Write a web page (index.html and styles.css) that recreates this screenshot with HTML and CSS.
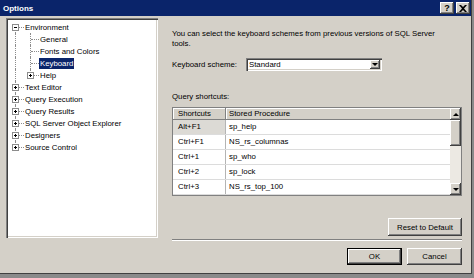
FILE: index.html
```html
<!DOCTYPE html>
<html lang="en">
<head>
    <meta charset="UTF-8">
    <meta name="viewport" content="width=device-width, initial-scale=1.0">
    <title>Options</title>
    <link rel="stylesheet" href="styles.css">
</head>
<body>
    <div class="window">
        <div class="titlebar">
            <span class="title">Options</span>
            <div class="title-buttons">
                <span class="tbtn help">?</span>
                <span class="tbtn close">
                    <svg width="8" height="7" viewBox="0 0 8 7"><path d="M0 0h2l2 2 2-2h2L5 3.5 8 7H6L4 5 2 7H0l3-3.5z" fill="#000"/></svg>
                </span>
            </div>
        </div>

        <div class="main">
            <!-- options tree -->
            <div class="tree">
                <div class="row">
                    <span class="cell bottom h"><span class="box"></span></span>
                    <span class="label">Environment</span>
                </div>
                <div class="row">
                    <span class="cell v"></span>
                    <span class="cell v h"></span>
                    <span class="label">General</span>
                </div>
                <div class="row">
                    <span class="cell v"></span>
                    <span class="cell v h"></span>
                    <span class="label">Fonts and Colors</span>
                </div>
                <div class="row">
                    <span class="cell v"></span>
                    <span class="cell v h"></span>
                    <span class="label selected">Keyboard</span>
                </div>
                <div class="row">
                    <span class="cell v"></span>
                    <span class="cell top h"><span class="box plus"></span></span>
                    <span class="label">Help</span>
                </div>
                <div class="row">
                    <span class="cell v h"><span class="box plus"></span></span>
                    <span class="label">Text Editor</span>
                </div>
                <div class="row">
                    <span class="cell v h"><span class="box plus"></span></span>
                    <span class="label">Query Execution</span>
                </div>
                <div class="row">
                    <span class="cell v h"><span class="box plus"></span></span>
                    <span class="label">Query Results</span>
                </div>
                <div class="row">
                    <span class="cell v h"><span class="box plus"></span></span>
                    <span class="label">SQL Server Object Explorer</span>
                </div>
                <div class="row">
                    <span class="cell v h"><span class="box plus"></span></span>
                    <span class="label">Designers</span>
                </div>
                <div class="row">
                    <span class="cell top h"><span class="box plus"></span></span>
                    <span class="label">Source Control</span>
                </div>
            </div>

            <div class="pane">
                <p class="desc">You can select the keyboard schemes from previous versions of SQL Server<br>tools.</p>

                <div class="scheme">
                    <label>Keyboard scheme:</label>
                    <div class="combo">
                        <span class="combo-text">Standard</span>
                        <span class="sbtn combo-btn"><span class="arrow down"></span></span>
                    </div>
                </div>

                <div class="section-label">Query shortcuts:</div>

                <div class="grid">
                    <div class="rows">
                        <div class="grow ghead">
                            <span class="gc first">Shortcuts</span>
                            <span class="gc">Stored Procedure</span>
                        </div>
                        <div class="grow">
                            <span class="gc first current">Alt+F1</span>
                            <span class="gc">sp_help</span>
                        </div>
                        <div class="grow">
                            <span class="gc first">Ctrl+F1</span>
                            <span class="gc">NS_rs_columnas</span>
                        </div>
                        <div class="grow">
                            <span class="gc first">Ctrl+1</span>
                            <span class="gc">sp_who</span>
                        </div>
                        <div class="grow">
                            <span class="gc first">Ctrl+2</span>
                            <span class="gc">sp_lock</span>
                        </div>
                        <div class="grow">
                            <span class="gc first">Ctrl+3</span>
                            <span class="gc">NS_rs_top_100</span>
                        </div>
                    </div>
                    <div class="scrollbar">
                        <span class="sbtn"><span class="arrow up"></span></span>
                        <span class="thumb"></span>
                        <span class="track"></span>
                        <span class="sbtn"><span class="arrow down"></span></span>
                    </div>
                </div>

                <div class="reset-row">
                    <button class="btn reset">Reset to Default</button>
                </div>
                <div class="sep"></div>
            </div>
        </div>

        <div class="footer">
            <button class="btn default">OK</button>
            <button class="btn">Cancel</button>
        </div>
    </div>
</body>
</html>
```

FILE: styles.css
```css
* {
    margin: 0;
    padding: 0;
    box-sizing: border-box;
}

body {
    width: 474px;
    height: 278px;
    background: #8a8a8a;
    font-family: "Liberation Sans", Arial, sans-serif;
    font-size: 7.8px;
    color: #000;
    overflow: hidden;
}

.window {
    width: 472px;
    height: 274px;
    background: #d4d0c8;
    border-right: 1px solid #404040;
    border-bottom: 1px solid #404040;
}

/* title bar */
.titlebar {
    height: 16px;
    background: #0a246a;
    display: flex;
    align-items: center;
    justify-content: space-between;
    padding: 0 1px 0 3px;
}

.title {
    color: #fff;
    font-weight: bold;
    font-size: 8px;
}

.title-buttons {
    display: flex;
    gap: 2px;
}

.tbtn {
    width: 14px;
    height: 12px;
    background: #d4d0c8;
    box-shadow: inset -1px -1px #404040, inset 1px 1px #fff, inset -2px -2px #808080;
    display: flex;
    align-items: center;
    justify-content: center;
    font-weight: bold;
    font-size: 9px;
    line-height: 1;
}

/* layout */
.main {
    display: flex;
    align-items: flex-start;
    padding: 2px 0 0 6px;
}

.tree {
    width: 152px;
    height: 220px;
    background: #fff;
    padding-top: 3px;
    box-shadow: inset 1px 1px #808080, inset 2px 2px #404040, inset -1px -1px #fff, inset -2px -2px #d4d0c8;
    padding-left: 2px;
}

.row {
    display: flex;
    align-items: center;
    height: 12px;
}

.cell {
    position: relative;
    flex: none;
    width: 15px;
    height: 12px;
}

.cell.v::before,
.cell.top::before,
.cell.bottom::before {
    content: "";
    position: absolute;
    left: 7px;
    top: 0;
    bottom: 0;
    border-left: 1px dotted #8c8c8c;
}

.cell.top::before {
    bottom: 6px;
}

.cell.bottom::before {
    top: 6px;
}

.cell.h::after {
    content: "";
    position: absolute;
    left: 8px;
    right: -1px;
    top: 6px;
    border-top: 1px dotted #8c8c8c;
}

.box {
    position: absolute;
    left: 4px;
    top: 3px;
    width: 7px;
    height: 7px;
    border: 1px solid #8c8c8c;
    background: #fff;
    z-index: 1;
}

.box::before {
    content: "";
    position: absolute;
    left: 1px;
    top: 2px;
    width: 3px;
    height: 1px;
    background: #000;
}

.box.plus::after {
    content: "";
    position: absolute;
    left: 2px;
    top: 1px;
    width: 1px;
    height: 3px;
    background: #000;
}

.label {
    margin-left: 1px;
    padding: 0 1px;
    line-height: 11px;
    white-space: nowrap;
}

.label.selected {
    background: #0a246a;
    color: #fff;
}

/* right pane */
.pane {
    width: 290px;
    margin-left: 14px;
    padding-top: 11px;
}

.desc {
    line-height: 10px;
}

.scheme {
    display: flex;
    align-items: center;
    margin-top: 9px;
    height: 13px;
}

.scheme label {
    width: 74px;
}

.combo {
    width: 136px;
    height: 13px;
    background: #fff;
    display: flex;
    align-items: center;
    justify-content: space-between;
    padding: 2px;
    box-shadow: inset 1px 1px #808080, inset 2px 2px #404040, inset -1px -1px #fff, inset -2px -2px #d4d0c8;
}

.combo-text {
    padding-left: 1px;
}

.combo-btn {
    width: 10px;
    height: 9px;
}

.sbtn {
    display: flex;
    align-items: center;
    justify-content: center;
    background: #d4d0c8;
    box-shadow: inset -1px -1px #404040, inset 1px 1px #fff, inset -2px -2px #808080;
}

.arrow {
    width: 0;
    height: 0;
    border-left: 3px solid transparent;
    border-right: 3px solid transparent;
}

.arrow.down {
    border-top: 3px solid #000;
}

.arrow.up {
    border-bottom: 3px solid #000;
}

.section-label {
    margin-top: 21px;
    line-height: 10px;
}

/* shortcuts grid */
.grid {
    display: flex;
    margin-top: 5px;
    height: 89px;
    border: 1px solid #808080;
    background: #fff;
}

.rows {
    flex: 1;
}

.grow {
    display: flex;
    height: 15px;
    border-bottom: 1px solid #dcdcdc;
}

.gc {
    flex: 1;
    padding-left: 3px;
    line-height: 14px;
    white-space: nowrap;
}

.gc.first {
    flex: none;
    width: 53px;
    padding-left: 5px;
    border-right: 1px solid #b4b4b4;
}

.gc.current {
    background: #dcdad5;
}

.ghead {
    height: 12px;
    background: #d4d0c8;
    border-bottom: 1px solid #808080;
}

.ghead .gc {
    line-height: 11px;
    box-shadow: inset 1px 1px #fff;
}

.ghead .gc.first {
    border-right: 1px solid #808080;
}

.scrollbar {
    width: 11px;
    display: flex;
    flex-direction: column;
    background: #ece9e3;
}

.scrollbar .sbtn {
    height: 12px;
}

.thumb {
    height: 26px;
    background: #d4d0c8;
    box-shadow: inset -1px -1px #404040, inset 1px 1px #fff, inset -2px -2px #808080;
}

.track {
    flex: 1;
}

/* buttons */
.btn {
    font: inherit;
    color: #000;
    background: #d4d0c8;
    border: none;
    box-shadow: inset -1px -1px #404040, inset 1px 1px #fff, inset -2px -2px #808080;
    height: 17px;
    width: 55px;
}

.btn.default {
    border: 1px solid #000;
}

.reset-row {
    display: flex;
    justify-content: flex-end;
    margin-top: 22px;
}

.btn.reset {
    width: 74px;
    height: 18px;
}

.sep {
    margin-top: 3px;
    border-top: 1px solid #808080;
    border-bottom: 1px solid #fff;
}

.footer {
    display: flex;
    justify-content: flex-end;
    gap: 5px;
    margin-top: 7px;
    padding-right: 9px;
}
```
